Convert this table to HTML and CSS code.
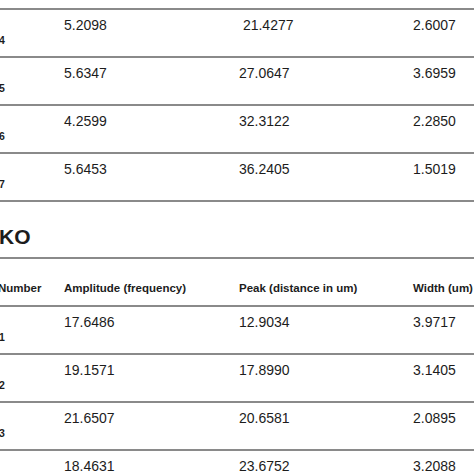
FILE: index.html
```html
<!DOCTYPE html>
<html>
<head>
<meta charset="utf-8">
<link rel="stylesheet" href="styles.css">
</head>
<body>
<div class="page">
  <div class="table top-table">
    <div class="row">
      <div class="label">4</div>
      <div class="cell">5.2098</div>
      <div class="cell">&nbsp;21.4277</div>
      <div class="cell">2.6007</div>
    </div>
    <div class="row">
      <div class="label">5</div>
      <div class="cell">5.6347</div>
      <div class="cell">27.0647</div>
      <div class="cell">3.6959</div>
    </div>
    <div class="row">
      <div class="label">6</div>
      <div class="cell">4.2599</div>
      <div class="cell">32.3122</div>
      <div class="cell">2.2850</div>
    </div>
    <div class="row">
      <div class="label">7</div>
      <div class="cell">5.6453</div>
      <div class="cell">36.2405</div>
      <div class="cell">1.5019</div>
    </div>
  </div>

  <h2 class="group-title">KO</h2>

  <div class="table">
    <div class="row head">
      <div class="hcell first">Number</div>
      <div class="hcell">Amplitude (frequency)</div>
      <div class="hcell">Peak (distance in um)</div>
      <div class="hcell">Width (um)</div>
    </div>
    <div class="row">
      <div class="label">1</div>
      <div class="cell">17.6486</div>
      <div class="cell">12.9034</div>
      <div class="cell">3.9717</div>
    </div>
    <div class="row">
      <div class="label">2</div>
      <div class="cell">19.1571</div>
      <div class="cell">17.8990</div>
      <div class="cell">3.1405</div>
    </div>
    <div class="row">
      <div class="label">3</div>
      <div class="cell">21.6507</div>
      <div class="cell">20.6581</div>
      <div class="cell">2.0895</div>
    </div>
    <div class="row">
      <div class="label">4</div>
      <div class="cell">18.4631</div>
      <div class="cell">23.6752</div>
      <div class="cell">3.2088</div>
    </div>
  </div>
</div>
</body>
</html>
```

FILE: styles.css
```css
html, body {
  margin: 0;
  padding: 0;
  background: #ffffff;
}

body {
  width: 474px;
  height: 474px;
  overflow: hidden;
  font-family: "Liberation Sans", Arial, sans-serif;
  color: #1c1c1c;
}

.page {
  padding-top: 8px;
}

.table {
  border-top: 2px solid #8a8a8a;
}

.row {
  display: grid;
  grid-template-columns: 64px 175px 174px 1fr;
  height: 46px;
  border-bottom: 2px solid #8a8a8a;
  white-space: nowrap;
}

.cell {
  font-size: 14px;
  line-height: 16px;
  padding-top: 7px;
}

.label {
  font-size: 10.5px;
  font-weight: bold;
  line-height: 12px;
  padding-top: 24px;
  margin-left: -1px;
}

.hcell {
  font-size: 11.5px;
  font-weight: bold;
  line-height: 14px;
  padding-top: 22px;
}

.hcell.first {
  margin-left: -2px;
}

.group-title {
  margin: 0;
  padding: 23px 0 8px 0;
  margin-left: -1px;
  font-size: 21px;
  line-height: 24px;
  font-weight: bold;
}
```
